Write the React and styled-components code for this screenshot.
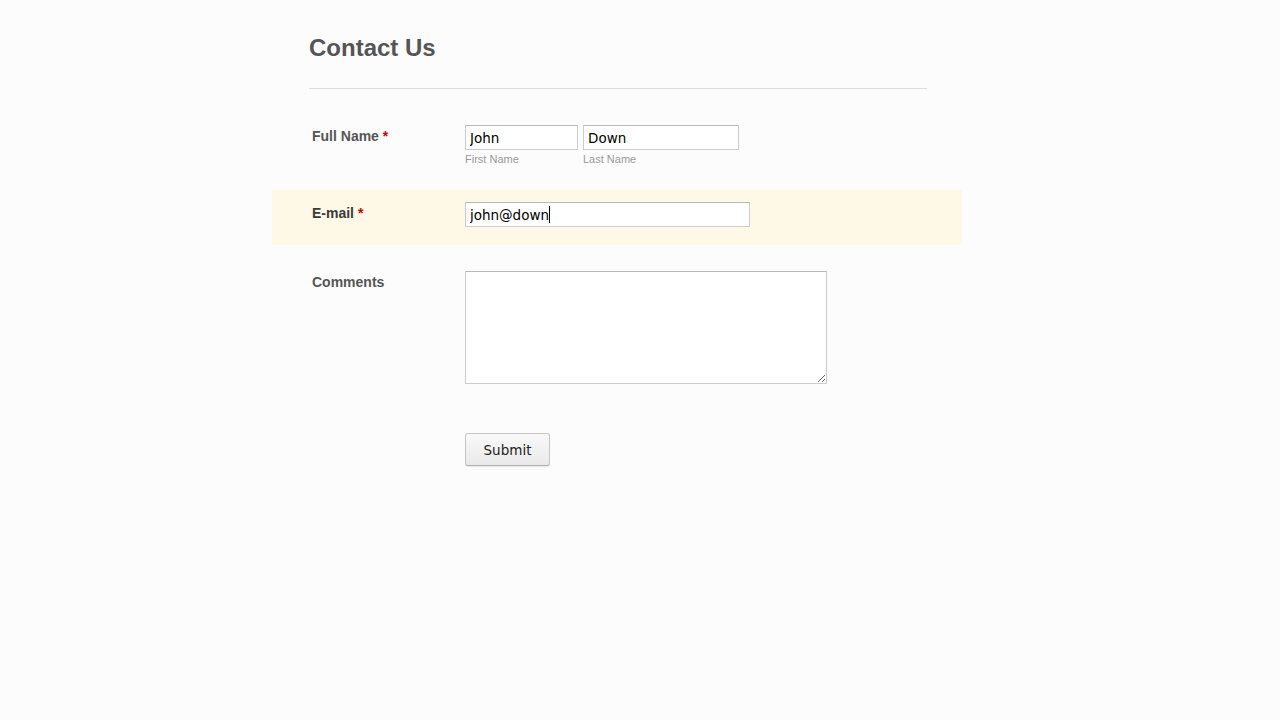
import React from 'react'
import styled, { createGlobalStyle } from 'styled-components'

const Global = createGlobalStyle`
  html, body {
    margin: 0;
    background: #fcfcfc;
  }
`

const Page = styled.div`
  width: 690px;
  margin-left: 272px;
  padding-top: 33px;
  font-family: "Liberation Sans", Arial, sans-serif;
`

const Header = styled.div`
  margin: 0 35px 0 37px;
  padding-bottom: 26px;
  border-bottom: 1px solid #dcdcdc;
`

const Title = styled.h1`
  margin: 0;
  font-size: 24px;
  line-height: 29px;
  font-weight: bold;
  color: #555;
`

const Row = styled.div`
  display: flex;
  align-items: flex-start;
  margin-top: ${p => p.$space}px;
  padding: 12px 40px 18px;
  background: ${p => (p.$active ? '#fef9e7' : 'transparent')};
`

const Label = styled.label`
  width: 153px;
  flex: none;
  font-size: 14px;
  line-height: 22px;
  font-weight: bold;
  color: ${p => (p.$active ? '#3a3a3a' : '#555')};
`

const Req = styled.span`
  color: #c00;
`

const Fields = styled.div`
  display: flex;
  gap: 5px;
`

const Field = styled.div`
  display: flex;
  flex-direction: column;
`

const Input = styled.input`
  box-sizing: border-box;
  width: ${p => p.$w}px;
  height: 25px;
  margin: 0;
  padding: 0 4px;
  border: 1px solid #cbcbcb;
  border-top-color: #b9b9b9;
  background: #fff;
  font-family: "DejaVu Sans", Verdana, sans-serif;
  font-size: 13.5px;
  color: #000;
  outline: none;
`

const Sub = styled.span`
  margin-top: 2px;
  font-size: 11px;
  line-height: 15px;
  color: #999;
`

const EmailBox = styled.div`
  position: relative;
`

const Caret = styled.span`
  position: absolute;
  left: 84px;
  top: 4px;
  width: 1px;
  height: 17px;
  background: #000;
`

const Area = styled.textarea`
  box-sizing: border-box;
  width: 362px;
  height: 113px;
  margin: 0;
  padding: 4px;
  border: 1px solid #cbcbcb;
  border-top-color: #b9b9b9;
  background: #fff;
  font-family: "DejaVu Sans", Verdana, sans-serif;
  font-size: 13.5px;
  outline: none;
  resize: both;
`

const Submit = styled.button`
  box-sizing: border-box;
  width: 85px;
  height: 33px;
  border: 1px solid #c6c6c6;
  border-bottom-color: #b0b0b0;
  border-radius: 3px;
  background: linear-gradient(#f9f9f9, #e9e9e9);
  box-shadow: 0 1px 1px rgba(0, 0, 0, 0.08);
  font-family: "DejaVu Sans", Verdana, sans-serif;
  font-size: 13.5px;
  color: #222;
  padding: 0;
  cursor: pointer;
`

export default function App() {
  return (
    <Page>
      <Global />
      <Header>
        <Title>Contact Us</Title>
      </Header>

      <Row $space={24}>
        <Label>Full Name <Req>*</Req></Label>
        <Fields>
          <Field>
            <Input $w={113} defaultValue="John" />
            <Sub>First Name</Sub>
          </Field>
          <Field>
            <Input $w={156} defaultValue="Down" />
            <Sub>Last Name</Sub>
          </Field>
        </Fields>
      </Row>

      <Row $space={5} $active>
        <Label $active>E-mail <Req>*</Req></Label>
        <EmailBox>
          <Input $w={285} defaultValue="john@down" />
          <Caret />
        </EmailBox>
      </Row>

      <Row $space={14}>
        <Label>Comments</Label>
        <Area />
      </Row>

      <Row $space={19}>
        <Label />
        <Submit>Submit</Submit>
      </Row>
    </Page>
  )
}
